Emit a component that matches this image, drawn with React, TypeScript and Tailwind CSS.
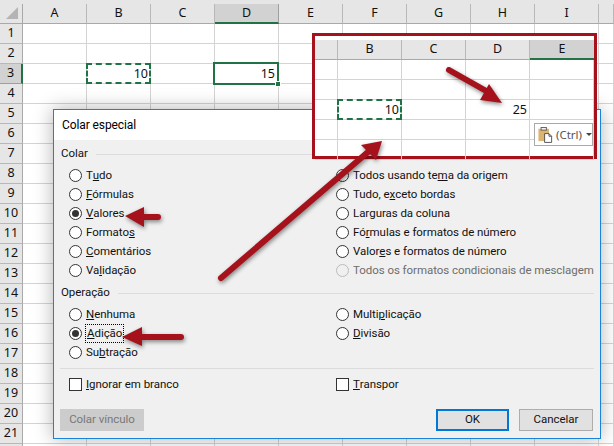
import type { ReactNode } from "react";

const COLUMNS = ["A", "B", "C", "D", "E", "F", "G", "H", "I", ""];
const ROWS = Array.from({ length: 22 }, (_, i) => i + 1);
const INSET_COLUMNS = ["B", "C", "D", "E"];
const INSET_ROWS = [1, 2, 3, 4, 5];

function Sheet() {
  return (
    <div className="grid grid-cols-[23px_repeat(9,64px)_1fr] grid-rows-[4px_20px] auto-rows-[20px] text-[12.5px] text-[#111]">
      <div className="col-span-11 bg-[#e6e6e6]" />
      <div className="flex items-end justify-end border-r border-b border-[#a9a9a9] bg-[#e6e6e6] pr-[4px] pb-[4px]">
        <div className="h-0 w-0 border-b-[12px] border-l-[12px] border-b-[#b4b4b4] border-l-transparent" />
      </div>
      {COLUMNS.map((c) => (
        <div
          key={c}
          className={
            c === "D"
              ? "flex items-center justify-center border-r border-b-2 border-r-[#9f9f9f] border-b-[#217346] bg-[#d2d2d2]"
              : "flex items-center justify-center border-r border-b border-r-[#b8b8b8] border-b-[#a9a9a9] bg-[#e6e6e6]"
          }
        >
          {c}
        </div>
      ))}
      {ROWS.map((r) => (
        <div key={r} className="contents">
          <div
            className={
              r === 3
                ? "flex items-center justify-center border-r-2 border-b border-r-[#217346] border-b-[#9f9f9f] bg-[#d2d2d2]"
                : "flex items-center justify-center border-r border-b border-r-[#a9a9a9] border-b-[#b8b8b8] bg-[#e6e6e6]"
            }
          >
            {r < 22 ? r : ""}
          </div>
          {COLUMNS.map((c) => (
            <div key={c} className="relative border-r border-b border-[#d4d4d4] bg-white">
              {r === 3 && c === "B" && (
                <div className="absolute top-[-1px] left-[-1px] flex h-[21px] w-[65px] items-center justify-end border-2 border-dashed border-[#217346] pt-[1px] pr-[1px]">
                  10
                </div>
              )}
              {r === 3 && c === "D" && (
                <div className="absolute top-[-2px] left-[-2px] z-10 flex h-[23px] w-[66px] items-center justify-end border-2 border-[#217346] pt-[1px] pr-[2px]">
                  15
                  <div className="absolute right-[-4px] bottom-[-4px] h-[6px] w-[6px] border border-white bg-[#217346]" />
                </div>
              )}
            </div>
          ))}
        </div>
      ))}
    </div>
  );
}

function Radio({ checked, disabled, children }: { checked?: boolean; disabled?: boolean; children: ReactNode }) {
  return (
    <div className={disabled ? "flex h-[19px] items-center whitespace-nowrap text-[#6d6d6d]" : "flex h-[19px] items-center whitespace-nowrap"}>
      <div
        className={
          disabled
            ? "mr-[4px] flex h-[13px] w-[13px] items-center justify-center rounded-full border border-[#bcbcbc] bg-[#f0f0f0]"
            : "mr-[4px] flex h-[13px] w-[13px] items-center justify-center rounded-full border border-[#333] bg-white"
        }
      >
        {checked && <div className="h-[7px] w-[7px] rounded-full bg-[#333]" />}
      </div>
      {children}
    </div>
  );
}

function Check({ children }: { children: ReactNode }) {
  return (
    <div className="flex h-[19px] items-center whitespace-nowrap">
      <div className="mr-[4px] h-[13px] w-[13px] border border-[#333] bg-white" />
      {children}
    </div>
  );
}

function GroupHeading({ label }: { label: string }) {
  return (
    <div className="flex h-[16px] items-center pr-[6px] pl-[7px]">
      <span className="mr-[8px]">{label}</span>
      <div className="h-px flex-1 bg-[#dcdcdc]" />
    </div>
  );
}

function PasteDialog() {
  return (
    <div className="absolute top-[109px] left-[53px] flex h-[330px] w-[548px] flex-col border border-[#1883d7] bg-[#f0f0f0] font-['Roboto',sans-serif] text-[11.5px] tracking-[-0.05px] text-[#111] shadow-[0_0_18px_rgba(0,0,0,0.3)]">
      <div className="flex h-[30px] items-center bg-white pl-[8px] text-[12px] tracking-[-0.1px] text-black">
        Colar especial
      </div>
      <div className="mt-[6px]">
        <GroupHeading label="Colar" />
      </div>
      <div className="mt-[4px] grid grid-cols-[267px_1fr] pl-[15px]">
        <div>
          <Radio>T<u>u</u>do</Radio>
          <Radio><u>F</u>órmulas</Radio>
          <Radio checked><u>V</u>alores</Radio>
          <Radio>Formato<u>s</u></Radio>
          <Radio><u>C</u>omentários</Radio>
          <Radio>Va<u>l</u>idação</Radio>
        </div>
        <div>
          <Radio>Todos usando te<u>m</u>a da origem</Radio>
          <Radio>Tudo, e<u>x</u>ceto bordas</Radio>
          <Radio>Lar<u>g</u>uras da coluna</Radio>
          <Radio>Fó<u>r</u>mulas e formatos de número</Radio>
          <Radio>Valor<u>e</u>s e formatos de número</Radio>
          <Radio disabled>Todos os formatos condicionais de mesclagem</Radio>
        </div>
      </div>
      <div className="mt-[5px]">
        <GroupHeading label="Operação" />
      </div>
      <div className="mt-[4px] grid grid-cols-[267px_1fr] pl-[15px]">
        <div>
          <Radio><u>N</u>enhuma</Radio>
          <Radio checked>
            <span className="-ml-[1px] border border-dotted border-black px-[1px]"><u>A</u>dição</span>
          </Radio>
          <Radio>Su<u>b</u>tração</Radio>
        </div>
        <div>
          <Radio>Multi<u>p</u>licação</Radio>
          <Radio><u>D</u>ivisão</Radio>
        </div>
      </div>
      <div className="mx-[6px] mt-[6px] h-px bg-[#dcdcdc]" />
      <div className="mt-[6px] grid grid-cols-[267px_1fr] pl-[15px]">
        <Check><u>I</u>gnorar em branco</Check>
        <Check><u>T</u>ranspor</Check>
      </div>
      <div className="mt-auto flex pr-[7px] pb-[7px] pl-[6px]">
        <button className="h-[22px] w-[84px] bg-[#cccccc] text-[#787878]">Colar vínculo</button>
        <button className="ml-auto h-[22px] w-[73px] border-2 border-[#0078d7] bg-[#e1e1e1]">OK</button>
        <button className="ml-[10px] h-[22px] w-[74px] border border-[#adadad] bg-[#e1e1e1]">Cancelar</button>
      </div>
    </div>
  );
}

function ResultInset() {
  return (
    <div className="absolute top-[33px] left-[312px] h-[126px] w-[285px] border-[3px] border-[#a5121c] bg-white text-[12.5px] text-[#111]">
      <div className="grid grid-cols-[23px_repeat(4,64px)] grid-rows-[4px_20px] auto-rows-[20px]">
        <div className="col-span-5 bg-white" />
        <div className="border-r border-b border-r-[#b8b8b8] border-b-[#a9a9a9] bg-[#e6e6e6]" />
        {INSET_COLUMNS.map((c) => (
          <div
            key={c}
            className={
              c === "E"
                ? "flex items-center justify-center border-b-2 border-b-[#217346] bg-[#d2d2d2]"
                : "flex items-center justify-center border-r border-b border-r-[#b8b8b8] border-b-[#a9a9a9] bg-[#e6e6e6]"
            }
          >
            {c}
          </div>
        ))}
        {INSET_ROWS.map((r) => (
          <div key={r} className="contents">
            <div className="border-r border-b border-[#d4d4d4]" />
            {INSET_COLUMNS.map((c) => (
              <div key={c} className="relative border-r border-b border-[#d4d4d4]">
                {r === 3 && c === "B" && (
                  <div className="absolute top-[-1px] left-[-1px] flex h-[21px] w-[65px] items-center justify-end border-2 border-dashed border-[#217346] pt-[2px] pr-[1px]">
                    10
                  </div>
                )}
                {r === 3 && c === "D" && (
                  <div className="flex h-full items-center justify-end pt-[2px] pr-[2px]">25</div>
                )}
              </div>
            ))}
          </div>
        ))}
      </div>
      <div className="absolute top-[87px] left-[219px] flex h-[23px] w-[59px] items-center border border-[#a9a9a9] bg-white pl-[3px]">
        <svg width="15" height="19" viewBox="0 0 17 19">
          <rect x="0.5" y="3" width="12" height="14" fill="#dcb36f" />
          <rect x="3.5" y="1.5" width="6" height="3" fill="#f2f2f2" stroke="#555" />
          <path d="M7.5 8.5h5l3 3v7h-8z" fill="#fff" stroke="#444" />
          <path d="M12.5 8.5v3h3" fill="none" stroke="#444" />
        </svg>
        <span className="ml-[3px] text-[11.5px] text-[#555]">(Ctrl)</span>
        <div className="ml-[4px] h-0 w-0 border-x-[3px] border-t-[3px] border-x-transparent border-t-[#444]" />
      </div>
    </div>
  );
}

function Arrows() {
  return (
    <svg
      className="pointer-events-none absolute top-0 left-0 drop-shadow-[1px_2px_2px_rgba(0,0,0,0.45)]"
      width="614"
      height="446"
      viewBox="0 0 614 446"
      fill="#a5121c"
    >
      <path d="M449 70L488 92" stroke="#a5121c" strokeWidth="6" strokeLinecap="round" />
      <path d="M502 103L489 84L480 100Z" />
      <path d="M221 278L368 152" stroke="#a5121c" strokeWidth="6" strokeLinecap="round" />
      <path d="M382 141L361 145L376 160Z" />
      <path d="M140 217L158 217" stroke="#a5121c" strokeWidth="6" strokeLinecap="round" />
      <path d="M125 216L144 207L144 227Z" />
      <path d="M138 337L181 337" stroke="#a5121c" strokeWidth="6" strokeLinecap="round" />
      <path d="M122 337L142 327L142 346Z" />
    </svg>
  );
}

export default function App() {
  return (
    <div className="relative h-[446px] w-[614px] overflow-hidden bg-white font-['Noto_Sans',sans-serif]">
      <Sheet />
      <PasteDialog />
      <ResultInset />
      <Arrows />
    </div>
  );
}
